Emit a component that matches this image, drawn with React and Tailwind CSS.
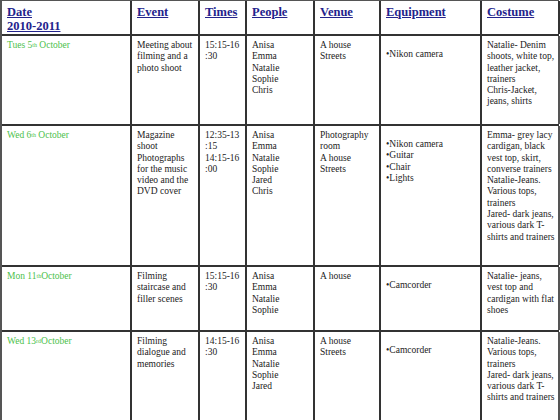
import React from 'react';

const cols = ['w-[130px]', 'w-[68px]', 'w-[47px]', 'w-[68px]', 'w-[66px]', 'w-[101px]', 'w-[78px]'];
const heads = ['Event', 'Times', 'People', 'Venue', 'Equipment', 'Costume'];

const rows = [
  {
    h: 'h-[90px]',
    day: 'Tues 5',
    sup: 'th',
    gap: ' ',
    event: ['Meeting about', 'filming and a', 'photo shoot'],
    times: ['15:15-16', ':30'],
    people: ['Anisa', 'Emma', 'Natalie', 'Sophie', 'Chris'],
    venue: ['A house', 'Streets'],
    equip: ['Nikon camera'],
    costume: ['Natalie- Denim', 'shoots, white top,', 'leather jacket,', 'trainers', 'Chris-Jacket,', 'jeans, shirts'],
  },
  {
    h: 'h-[141px]',
    day: 'Wed 6',
    sup: 'th',
    gap: ' ',
    event: ['Magazine', 'shoot', 'Photographs', 'for the music', 'video and the', 'DVD cover'],
    times: ['12:35-13', ':15', '14:15-16', ':00'],
    people: ['Anisa', 'Emma', 'Natalie', 'Sophie', 'Jared', 'Chris'],
    venue: ['Photography', 'room', 'A house', 'Streets'],
    equip: ['Nikon camera', 'Guitar', 'Chair', 'Lights'],
    costume: ['Emma- grey lacy', 'cardigan, black', 'vest top, skirt,', 'converse trainers', 'Natalie-Jeans.', 'Various tops,', 'trainers', 'Jared- dark jeans,', 'various dark T-', 'shirts and trainers'],
  },
  {
    h: 'h-[65px]',
    day: 'Mon 11',
    sup: 'th',
    gap: '',
    event: ['Filming', 'staircase and', 'filler scenes'],
    times: ['15:15-16', ':30'],
    people: ['Anisa', 'Emma', 'Natalie', 'Sophie'],
    venue: ['A house'],
    equip: ['Camcorder'],
    costume: ['Natalie- jeans,', 'vest top and', 'cardigan with flat', 'shoes'],
  },
  {
    h: 'h-[100px]',
    day: 'Wed 13',
    sup: 'rd',
    gap: '',
    event: ['Filming', 'dialogue and', 'memories'],
    times: ['14:15-16', ':30'],
    people: ['Anisa', 'Emma', 'Natalie', 'Sophie', 'Jared'],
    venue: ['A house', 'Streets'],
    equip: ['Camcorder'],
    costume: ['Natalie-Jeans.', 'Various tops,', 'trainers', 'Jared- dark jeans,', 'various dark T-', 'shirts and trainers'],
  },
];

function Lines({ items }) {
  return (
    <div className="flex flex-col">
      {items.map((t, i) => (
        <span key={i} className="whitespace-nowrap">{t}</span>
      ))}
    </div>
  );
}

export default function App() {
  return (
    <div className="w-[560px] h-[420px] overflow-hidden bg-white font-['Liberation_Serif','Times_New_Roman',serif]">
      <div className="w-[559px] border-l-2 border-t border-[#555]">
        <div className="flex h-[35px] border-b-2 border-[#333]">
          <div className={`${cols[0]} shrink-0 border-r-2 border-[#333] pl-[5px] pt-[4px] text-[12.5px] leading-[14px] font-bold underline text-[#23238c]`}>
            Date<br />2010-2011
          </div>
          {heads.map((h, i) => (
            <div key={h} className={`${cols[i + 1]} shrink-0 border-r-2 border-[#333] pl-[5px] pt-[4px] text-[12.5px] leading-[14px] font-bold underline text-[#23238c]`}>
              {h}
            </div>
          ))}
        </div>
        {rows.map((r, ri) => (
          <div key={ri} className={`flex ${r.h} border-b-2 border-[#333] text-[9.5px] leading-[11.3px] text-[#222]`}>
            <div className={`${cols[0]} shrink-0 border-r-2 border-[#333] pl-[5px] pt-[4px] text-[#4cbf4c] whitespace-nowrap`}>
              {r.day}
              <sup className="text-[6px] relative -top-[1px]">{r.sup}</sup>
              {r.gap}October
            </div>
            <div className={`${cols[1]} shrink-0 border-r-2 border-[#333] pl-[5px] pt-[4px]`}>
              <Lines items={r.event} />
            </div>
            <div className={`${cols[2]} shrink-0 border-r-2 border-[#333] pl-[5px] pt-[4px]`}>
              <Lines items={r.times} />
            </div>
            <div className={`${cols[3]} shrink-0 border-r-2 border-[#333] pl-[5px] pt-[4px]`}>
              <Lines items={r.people} />
            </div>
            <div className={`${cols[4]} shrink-0 border-r-2 border-[#333] pl-[5px] pt-[4px]`}>
              <Lines items={r.venue} />
            </div>
            <div className={`${cols[5]} shrink-0 border-r-2 border-[#333] pl-[5px] pt-[13px]`}>
              <div className="flex flex-col">
                {r.equip.map((e) => (
                  <span key={e} className="whitespace-nowrap">
                    •{e}
                  </span>
                ))}
              </div>
            </div>
            <div className={`${cols[6]} shrink-0 border-r-2 border-[#555] pl-[5px] pt-[4px]`}>
              <Lines items={r.costume} />
            </div>
          </div>
        ))}
      </div>
    </div>
  );
}
